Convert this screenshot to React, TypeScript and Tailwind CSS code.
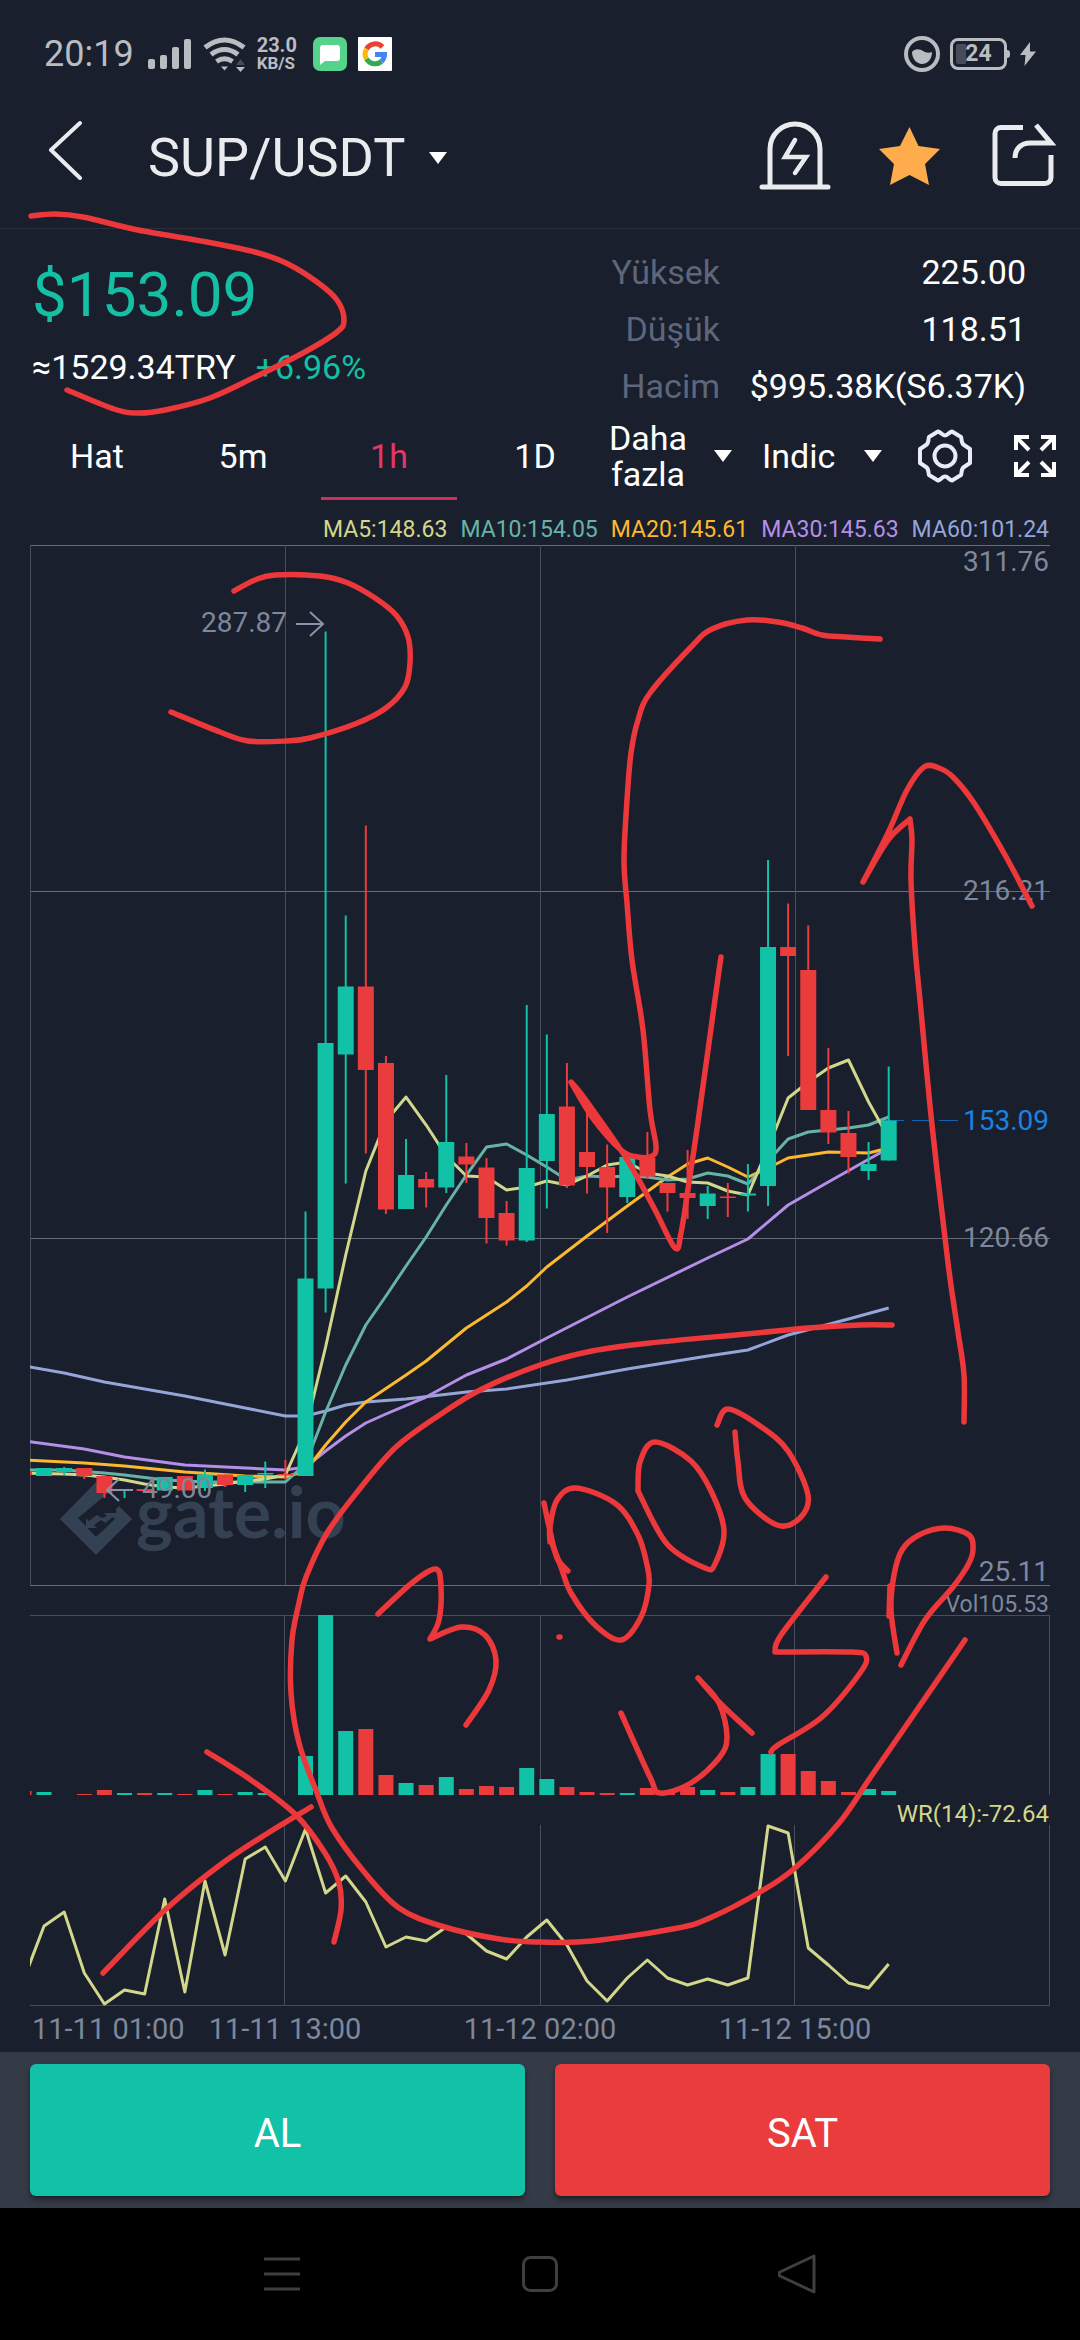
import { useState } from 'react';

type Point = [number, number];

interface Candle {
  up: boolean;
  high: number;
  top: number;
  bottom: number;
  low: number;
  volume: number;
}

const STEP = 20.11;
const FIRST_INDEX = -14;
const xAt = (index: number) => 305.5 + index * STEP;

const c = (up: boolean, high: number, top: number, bottom: number, low: number, volume: number): Candle => ({
  up,
  high,
  top,
  bottom,
  low,
  volume,
});

const candles: Candle[] = [
  c(false, 1471, 1471, 1475, 1475, 4),
  c(true, 1468, 1468, 1476, 1476, 3),
  c(true, 1467, 1468, 1472, 1475, 0),
  c(false, 1468, 1468, 1476, 1479, 1),
  c(false, 1476, 1476, 1493, 1498, 5),
  c(true, 1489, 1489.5, 1491, 1498, 2),
  c(false, 1489, 1489, 1491, 1491, 2),
  c(true, 1477, 1477, 1490.5, 1490.5, 2),
  c(false, 1476, 1476, 1490.5, 1490.5, 1),
  c(true, 1469.5, 1474.5, 1488, 1491, 5),
  c(false, 1474.5, 1474.5, 1485, 1487, 1),
  c(true, 1475, 1475, 1485, 1492, 3),
  c(true, 1461.5, 1473, 1474.5, 1488, 2),
  c(false, 1460, 1474, 1475.5, 1479.5, 0),
  c(true, 1211.5, 1278.5, 1476, 1476, 39),
  c(true, 631.5, 1043, 1288.5, 1312.5, 180),
  c(true, 915.5, 986.5, 1054.5, 1183.5, 64),
  c(false, 825.5, 986.5, 1070, 1153.5, 66),
  c(false, 1056, 1063, 1209.5, 1214, 20),
  c(true, 1139, 1175, 1209, 1209, 12),
  c(false, 1172, 1179, 1187.5, 1207.5, 10),
  c(true, 1075, 1142, 1187.5, 1193, 18),
  c(false, 1143, 1156.5, 1164.5, 1183, 6),
  c(false, 1158, 1167.5, 1218, 1243.5, 9),
  c(false, 1201, 1213, 1240.5, 1245.5, 8),
  c(true, 1005, 1168, 1240.5, 1242, 27),
  c(true, 1034.5, 1114, 1161, 1208.5, 16),
  c(false, 1063, 1106.5, 1185.5, 1188, 8),
  c(false, 1113, 1152, 1167, 1193.5, 3),
  c(false, 1144.5, 1167, 1187.5, 1233, 2),
  c(true, 1157, 1157, 1197, 1203, 2),
  c(false, 1132, 1158, 1176.5, 1179, 7),
  c(false, 1183, 1183, 1193, 1211.5, 3),
  c(false, 1150, 1193, 1198, 1219, 8),
  c(true, 1186, 1193.5, 1206, 1219, 5),
  c(false, 1183, 1196.5, 1198, 1217, 3),
  c(true, 1164, 1193.5, 1195.5, 1211.5, 8),
  c(true, 860, 947, 1186, 1206, 41),
  c(false, 903.5, 947, 956, 1056, 41),
  c(false, 925.5, 970, 1110, 1110, 24),
  c(false, 1048, 1110, 1132.5, 1144, 14),
  c(false, 1111, 1133, 1157, 1173.5, 3),
  c(true, 1142, 1164, 1171, 1180, 6),
  c(true, 1066.5, 1120.5, 1160.5, 1160.5, 4),
];

// [candle index, y] pairs
const ma5: Point[] = [
  [-14, 1473], [-12, 1474], [-11, 1475], [-10, 1477], [-9, 1480], [-8, 1484], [-7, 1487], [-6, 1488],
  [-5, 1486], [-4, 1484], [-3, 1481], [-2, 1479], [-1, 1475], [0, 1430], [1, 1347], [2, 1255], [3, 1171],
  [4, 1121], [5, 1097], [6, 1125], [7, 1156], [8, 1176], [9, 1177], [10, 1190], [11, 1187], [12, 1181],
  [13, 1185], [14, 1176], [15, 1165], [16, 1162], [17, 1173], [18, 1176], [19, 1182], [20, 1183],
  [21, 1191], [22, 1195], [23, 1148], [24, 1098], [25, 1082], [26, 1068], [27, 1060], [28, 1102], [29, 1138],
];

const ma10: Point[] = [
  [-14, 1470], [-12, 1470], [-10, 1473], [-9, 1475], [-7, 1480], [-5, 1482], [-3, 1482], [-1, 1482],
  [0, 1464], [1, 1412], [2, 1365], [3, 1325], [4, 1296], [5, 1266], [6, 1237], [7, 1205], [8, 1175],
  [9, 1147], [10, 1144], [11, 1155], [12, 1167], [13, 1180], [14, 1176], [15, 1177], [16, 1176],
  [17, 1177], [18, 1180], [19, 1179], [20, 1173], [21, 1176], [22, 1184], [23, 1161], [24, 1139],
  [25, 1132], [26, 1130], [27, 1128], [28, 1125], [29, 1117],
];

const ma20: Point[] = [
  [-14, 1460], [-11, 1463], [-9, 1466], [-6, 1472], [-3, 1476], [-1, 1477], [0, 1471], [1, 1445],
  [2, 1422], [3, 1402], [5, 1375], [6, 1361], [8, 1328], [10, 1302], [11, 1286], [12, 1267], [14, 1236],
  [16, 1206], [18, 1177], [19, 1164], [20, 1158], [21, 1167], [22, 1177], [23, 1168], [24, 1158],
  [26, 1152], [28, 1153], [29, 1148],
];

const ma30: Point[] = [
  [-14, 1441], [-11, 1449], [-9, 1457], [-6, 1465], [-1, 1470], [0, 1467], [1, 1451], [2, 1436],
  [3, 1423], [4, 1414], [6, 1397], [8, 1375], [10, 1359], [12, 1338], [16, 1297], [20, 1258],
  [22, 1239], [24, 1205], [26, 1182], [29, 1148],
];

const ma60: Point[] = [
  [-14, 1366], [-12, 1373], [-10, 1382], [-8, 1389], [-6, 1396], [-3, 1408], [-1, 1416], [0, 1416],
  [1, 1411], [2, 1405], [3, 1402], [5, 1399], [8, 1392], [10, 1389], [13, 1380], [16, 1369], [20, 1356],
  [22, 1350], [24, 1335], [27, 1319], [29, 1308],
];

const wr: Point[] = [
  1979, 1926, 1912, 1973, 2004, 1990, 1994, 1899, 1992, 1881, 1955, 1859, 1847, 1881, 1829, 1893, 1876, 1902,
  1947, 1937, 1941, 1927, 1934, 1951, 1959, 1937, 1920, 1945, 1981, 2001, 1978, 1960, 1978, 1985, 1979, 1985,
  1978, 1826, 1833, 1948, 1965, 1983, 1988, 1964,
].map((y, index) => [index + FIRST_INDEX, y]);

const lines = [
  { key: 'ma60', color: '#95a5d8', points: ma60 },
  { key: 'ma30', color: '#b58ee8', points: ma30 },
  { key: 'ma20', color: '#fcb92f', points: ma20 },
  { key: 'ma10', color: '#68b3a8', points: ma10 },
  { key: 'ma5', color: '#d3d78b', points: ma5 },
  { key: 'wr', color: '#d3d78b', points: wr },
];

const toPoints = (points: Point[]) => points.map(([index, y]) => `${xAt(index)},${y}`).join(' ');

// Hand-drawn notes over the chart. A repeated point makes a sharp corner.
const notes: Point[][] = [
  [[31, 216], [55, 214], [83, 217], [138, 230], [207, 242], [255, 252], [286, 263], [317, 282], [337, 300], [344, 320], [337, 332], [303, 353], [255, 377], [210, 398], [165, 410], [138, 413], [114, 409], [67, 390]],
  [[234, 591], [255, 580], [275, 575], [320, 576], [348, 583], [375, 598], [396, 615], [408, 637], [410, 663], [405, 687], [386, 708], [355, 724], [310, 738], [286, 741], [248, 741], [220, 732], [171, 712]],
  [[880, 639], [846, 637], [822, 635], [802, 628], [778, 622], [747, 620], [712, 629], [691, 647], [650, 693], [638, 720], [631, 753], [627, 800], [624, 860], [627, 903], [632, 960], [643, 1030], [650, 1110], [656, 1146], [652, 1156], [638, 1157], [621, 1150], [592, 1117], [571, 1082], [571, 1082], [585, 1099], [626, 1158], [654, 1208], [675, 1248], [681, 1233], [688, 1189], [698, 1122], [717, 985], [721, 957]],
  [[1032, 906], [1005, 855], [974, 803], [953, 777], [939, 768], [924, 767], [907, 790], [888, 833], [863, 882], [863, 882], [888, 840], [910, 819], [910, 819], [912, 840], [911, 880], [915, 947], [920, 1000], [932, 1125], [948, 1263], [958, 1332], [964, 1375], [964, 1422]],
  [[892, 1325], [860, 1325], [808, 1328], [746, 1334], [650, 1343], [592, 1351], [540, 1365], [482, 1389], [441, 1414], [396, 1447], [358, 1491], [327, 1533], [306, 1577], [299, 1603], [292, 1640], [291, 1693], [299, 1743], [317, 1793], [332, 1828], [365, 1873], [399, 1908], [441, 1926], [499, 1939], [540, 1942], [592, 1941], [678, 1928], [712, 1917], [760, 1892], [795, 1868], [839, 1823], [870, 1778], [908, 1723], [965, 1640]],
  [[378, 1614], [413, 1582], [436, 1569], [441, 1587], [439, 1620], [430, 1639], [430, 1639], [461, 1627], [485, 1635], [496, 1660], [489, 1690], [466, 1725]],
  [[559, 1637], [560, 1637]],
  [[544, 1503], [550, 1531], [557, 1558], [568, 1571]],
  [[550, 1542], [550, 1527], [557, 1500], [576, 1488], [616, 1504], [638, 1535], [647, 1565], [649, 1585], [641, 1617], [621, 1640], [595, 1625], [571, 1593], [561, 1567], [550, 1538]],
  [[638, 1491], [640, 1462], [655, 1442], [691, 1461], [712, 1493], [724, 1531], [715, 1564], [705, 1568], [667, 1544], [638, 1491]],
  [[717, 1425], [728, 1409], [760, 1426], [788, 1451], [808, 1495], [800, 1518], [777, 1525], [745, 1498], [738, 1462], [735, 1432]],
  [[621, 1713], [650, 1777], [660, 1793], [691, 1783], [719, 1758], [727, 1737], [719, 1703], [698, 1678], [698, 1678], [722, 1705], [752, 1733]],
  [[826, 1577], [781, 1635], [775, 1652], [775, 1652], [850, 1652], [866, 1656], [860, 1673], [822, 1717], [778, 1745], [771, 1752]],
  [[890, 1586], [889, 1616]],
  [[897, 1653], [891, 1610], [894, 1575], [902, 1550], [919, 1535], [945, 1528], [969, 1535], [973, 1550], [968, 1565], [953, 1587], [925, 1620], [901, 1665]],
  [[207, 1752], [251, 1780], [296, 1815], [325, 1853], [339, 1883], [341, 1910], [334, 1942]],
  [[103, 1973], [165, 1910], [220, 1865], [268, 1833], [311, 1807]],
];

const smoothPath = (points: Point[]) => {
  let d = `M${points[0][0]} ${points[0][1]}`;
  for (let i = 0; i < points.length - 1; i += 1) {
    const p0 = points[i - 1] ?? points[i];
    const p1 = points[i];
    const p2 = points[i + 1];
    const p3 = points[i + 2] ?? p2;
    if (p1[0] === p2[0] && p1[1] === p2[1]) {
      continue;
    }
    const c1 = [p1[0] + (p2[0] - p0[0]) / 6, p1[1] + (p2[1] - p0[1]) / 6];
    const c2 = [p2[0] - (p3[0] - p1[0]) / 6, p2[1] - (p3[1] - p1[1]) / 6];
    d += `C${c1.join(' ')} ${c2.join(' ')} ${p2.join(' ')}`;
  }
  return d;
};

const StatusBar = () => (
  <div className="flex h-[108px] items-center justify-between pr-11 pl-11 text-[#b9bcc1]">
    <div className="flex items-center">
      <span className="text-[36px] leading-10">20:19</span>
      <svg className="ml-[14px] h-8 w-11" viewBox="0 0 44 32" fill="currentColor" aria-hidden="true">
        <rect x="0" y="21" width="7" height="10" rx="2" />
        <rect x="12" y="17" width="7" height="14" rx="2" />
        <rect x="24" y="9" width="7" height="22" rx="2" />
        <rect x="36" y="1" width="7" height="30" rx="2" />
      </svg>
      <svg className="ml-[11px] h-9 w-11" viewBox="0 0 44 36" fill="none" stroke="currentColor" strokeWidth="5" aria-hidden="true">
        <path d="M2 11.500Q21.500-3.500 41 11.500" />
        <path d="M8 18.500Q21.500 8.500 35 18.500" />
        <path d="M13.500 25.500Q21.500 20 29.500 25.500" />
        <path d="M18 30.500h7l-3.500 4z" fill="currentColor" stroke="none" />
        <path d="M33 29l4.500-6 4.500 6z" fill="#474c59" stroke="none" />
        <path d="M33 31h9l-4.500 5z" fill="currentColor" stroke="none" />
      </svg>
      <span className="ml-[10px] flex w-14 flex-col font-bold">
        <span className="text-[20px] leading-[18px]">23.0</span>
        <span className="text-[17px] leading-[18px]">KB/S</span>
      </span>
      <svg className="h-[34px] w-[34px]" viewBox="0 0 34 34" aria-hidden="true">
        <rect width="34" height="34" rx="7" fill="#56d38a" />
        <path d="M10 8h14a3 3 0 0 1 3 3v10a3 3 0 0 1-3 3H12l-5 4V11a3 3 0 0 1 3-3z" fill="#fff" />
      </svg>
      <svg className="ml-[11px] h-[34px] w-[34px]" viewBox="0 0 34 34" fill="none" strokeWidth="5" aria-hidden="true">
        <rect width="34" height="34" rx="1" fill="#fff" />
        <path d="M24.500 10A10 10 0 0 0 8.500 12" stroke="#ea4335" />
        <path d="M8.500 12A10 10 0 0 0 8.500 22" stroke="#fbbc05" />
        <path d="M8.500 22A10 10 0 0 0 23.500 24.500" stroke="#34a853" />
        <path d="M23.500 24.500A10 10 0 0 0 26.500 17.500H17" stroke="#4285f4" />
      </svg>
    </div>

    <div className="flex items-center gap-[10px]">
      <svg className="h-9 w-9" viewBox="0 0 36 36" aria-hidden="true">
        <circle cx="18" cy="18" r="16" fill="none" stroke="currentColor" strokeWidth="4" />
        <path d="M8 16c3-4 8-3 11-1 3 2 6 2 9 1 0 8-5 12-10 12S8 23 8 16z" fill="currentColor" />
      </svg>
      <div className="flex items-center">
        <div className="flex h-8 w-[57px] items-center justify-center rounded-lg border-3 border-current bg-linear-to-r from-[#474c59] from-25% to-transparent to-25% bg-clip-content p-[3px] text-[23px] font-bold">
          24
        </div>
        <span className="h-2 w-[3px] rounded-r-full bg-current" />
      </div>
      <svg className="h-6 w-4" viewBox="0 0 16 24" fill="currentColor" aria-hidden="true">
        <path d="M10 0L0 13h5.500L4.500 24 16 9.500h-6z" />
      </svg>
    </div>
  </div>
);

const Caret = () => (
  <svg className="h-3 w-[18px]" viewBox="0 0 18 12" fill="#fff" aria-hidden="true">
    <path d="M0 0h18l-9 12z" />
  </svg>
);

const Header = () => (
  <header className="border-b border-[#2a313e] pb-6">
    <div className="flex h-24 items-center justify-between pr-6 pl-12 text-[#e9ebee]">
      <div className="flex items-center">
        <button type="button" aria-label="Geri" className="pb-3">
          <svg className="h-[60px] w-9" viewBox="0 0 36 60" fill="none" stroke="currentColor" strokeWidth="4" strokeLinecap="round" strokeLinejoin="round">
            <path d="M32 3L3 30l29 28" />
          </svg>
        </button>
        <button type="button" aria-haspopup="listbox" className="ml-16 flex items-center gap-6 pt-1 text-[54px] leading-[60px]">
          <h1>SUP/USDT</h1>
          <Caret />
        </button>
      </div>

      <div className="flex items-center">
        <button type="button" aria-label="Fiyat alarmı">
          <svg className="h-[70px] w-[72px]" viewBox="0 0 72 70" fill="none" stroke="currentColor" strokeWidth="5" strokeLinecap="round">
            <path d="M11 65V28a25 25 0 0 1 50 0v37M3 66h66" />
            <path d="M36 19L26 36h21L36 52" strokeWidth="4.500" strokeLinejoin="miter" />
          </svg>
        </button>
        <button type="button" aria-label="Favorilerden çıkar" className="ml-12">
          <svg className="h-[60px] w-[61px]" viewBox="0 0 61 60" fill="#ffad4c">
            <path d="M30.500 1l9 19L61 23 46 38l4 21-19.500-10L11 59l4-21L0 23l21-3z" />
          </svg>
        </button>
        <button type="button" aria-label="Paylaş" className="ml-[52px] pb-1">
          <svg className="h-16 w-16" viewBox="0 0 64 64" fill="none" stroke="currentColor" strokeWidth="5">
            <path d="M31 5.500H9a6 6 0 0 0-6 6v44a6 6 0 0 0 6 6h44a6 6 0 0 0 6-6V33" />
            <path d="M23 36c0-9 6-15 15-15h21L44 3" strokeWidth="5" />
          </svg>
        </button>
      </div>
    </div>
  </header>
);

const stats = [
  { label: 'Yüksek', value: '225.00' },
  { label: 'Düşük', value: '118.51' },
  { label: 'Hacim', value: '$995.38K(S6.37K)' },
];

const Quote = () => (
  <section className="flex justify-between pt-[14px] pr-[54px] pl-8">
    <div className="pt-4">
      <p className="text-[62px] leading-[72px] text-[#15bfa3]">$153.09</p>
      <p className="flex gap-5 pt-4 text-[34px] leading-10">
        <span>≈1529.34TRY</span>
        <span className="text-[#15bfa3]">+6.96%</span>
      </p>
    </div>
    <dl className="pt-px text-right text-[34px] leading-[57px]">
      {stats.map((stat) => (
        <div key={stat.label} className="flex justify-end">
          <dt className="text-[#5d667b]">{stat.label}</dt>
          <dd className="w-[306px]">{stat.value}</dd>
        </div>
      ))}
    </dl>
  </section>
);

const intervals = ['Hat', '5m', '1h', '1D'];

const Toolbar = () => {
  const [active, setActive] = useState('1h');

  return (
    <nav className="flex h-[85px] items-stretch px-6 text-[34px] leading-9">
      {intervals.map((interval) => (
        <button
          key={interval}
          type="button"
          onClick={() => setActive(interval)}
          className={
            interval === active
              ? 'relative w-[146px] pb-1 text-[#e8346a] after:absolute after:inset-x-[5px] after:bottom-0 after:h-[3px] after:bg-[#d22f58]'
              : 'w-[146px] pb-1'
          }
        >
          {interval}
        </button>
      ))}
      <button type="button" aria-haspopup="menu" className="flex items-center gap-[26px] pb-1">
        <span className="w-20 text-center">Daha fazla</span>
        <Caret />
      </button>
      <button type="button" aria-haspopup="menu" className="ml-[30px] flex items-center gap-6 pb-1">
        <span className="w-[78px] text-left">Indic</span>
        <Caret />
      </button>
      <button type="button" aria-label="Ayarlar" className="ml-9 pb-1">
        <svg className="h-[54px] w-[54px]" viewBox="0 0 54 54" fill="none" stroke="#e8ecf8" strokeWidth="4" strokeLinejoin="round">
          <path d="M27 6.500C30 6.500 31 3 34 2.500L43 8C44 11 43 14 46 16L52 20V34L46 38C43 40 44 43 43 46L34 51.500C31 51 30 47.500 27 47.500C24 47.500 23 51 20 51.500L11 46C10 43 11 40 8 38L2 34V20L8 16C11 14 10 11 11 8L20 2.500C23 3 24 6.500 27 6.500Z" />
          <circle cx="27" cy="27" r="10.500" />
        </svg>
      </button>
      <button type="button" aria-label="Tam ekran" className="ml-auto pb-1">
        <svg className="h-[42px] w-[42px]" viewBox="0 0 42 42" fill="none" stroke="#fff" strokeWidth="4">
          <path d="M2 15V2h13M2 2l13 13M27 2h13v13M40 2L27 15M2 27v13h13M2 40l13-13M40 27v13H27M40 40L27 27" />
        </svg>
      </button>
    </nav>
  );
};

const Averages = () => (
  <div className="flex h-11 items-end justify-end gap-[13px] pr-[31px] text-[23px] leading-7">
    <span className="text-[#d3d78b]">MA5:148.63</span>
    <span className="text-[#68b3a8]">MA10:154.05</span>
    <span className="text-[#fcb92f]">MA20:145.61</span>
    <span className="text-[#b58ee8]">MA30:145.63</span>
    <span className="text-[#95a5d8]">MA60:101.24</span>
  </div>
);

const Chart = () => (
  <svg className="block h-auto w-full" viewBox="0 544 1080 1508" role="img" aria-label="SUP/USDT 1h">
    <defs>
      <clipPath id="plot">
        <rect x="30" y="544" width="1020" height="1464" />
      </clipPath>
    </defs>

    <g fill="#334152">
      <path d="M96 1482L60 1519L96 1555L132 1519L119 1506L116 1509V1518L96 1537L78 1518L108 1493Z" />
      <path d="M86 1518v10h11l-3-3 7-5 4 3 8-6 3 3v-7h-12l3 3-5 2-5-3-8 6z" />
      <text x="136" y="1538" className="font-[Lato] text-[70px] font-bold">
        gate.io
      </text>
    </g>

    <g stroke="#666c79" strokeWidth="1" shapeRendering="crispEdges">
      <path d="M30 545.500H1050M30 891.500H1050M30 1238.500H1050M30 1585.500H1050" />
      <path d="M30.500 545V1585M285.500 545V1585M540.500 545V1585M795.500 545V1585" stroke="#474d5a" />
      <path d="M30 1615.500H1050M30 2005.500H1050" stroke="#474d5a" />
      <path d="M284.500 1615V1795M540.500 1615V1795M794.500 1615V1795M1049.500 1615V1795" stroke="#474d5a" />
      <path d="M284.500 1825V2005M540.500 1825V2005M794.500 1825V2005M1049.500 1825V2005" stroke="#474d5a" />
    </g>

    <g clipPath="url(#plot)">
      <path d="M885 1120.500H962" stroke="#0f62b0" strokeDasharray="19 8" />
      {lines.map((line) => (
        <polyline key={line.key} points={toPoints(line.points)} fill="none" stroke={line.color} strokeWidth="3" strokeLinejoin="round" />
      ))}
      {candles.map((candle, i) => {
        const x = xAt(i + FIRST_INDEX);
        return (
          <g key={i} fill={candle.up ? '#11c2a6' : '#ea3b3d'}>
            <rect x={x - 1} y={candle.high} width="2" height={candle.low - candle.high} />
            <rect x={x - 8} y={candle.top} width="16" height={candle.bottom - candle.top} />
            <rect x={x - 7.5} y={1795 - candle.volume} width="15" height={candle.volume} />
          </g>
        );
      })}
    </g>

    <g fill="none" stroke="#8a93ab" strokeWidth="2">
      <path d="M296 624h27M310 612l13 12-13 12" />
      <path d="M133 1490h-26M119 1479l-12 11 12 11" />
    </g>

    <g fill="#7e879b" className="text-[28px]">
      <text x="201" y="632">287.87</text>
      <text x="142" y="1498">49.00</text>
      <g textAnchor="end">
        <text x="1049" y="571">311.76</text>
        <text x="1049" y="900">216.21</text>
        <text x="1049" y="1130" fill="#1b82e2">153.09</text>
        <text x="1049" y="1247">120.66</text>
        <text x="1049" y="1581">25.11</text>
        <text x="1049" y="1612" className="text-[23px]">Vol105.53</text>
        <text x="1049" y="1822" fill="#d3d78b" className="text-[24px]">WR(14):-72.64</text>
      </g>
      <g className="text-[29px]">
        <text x="32" y="2039">11-11 01:00</text>
        <text x="285" y="2039" textAnchor="middle">11-11 13:00</text>
        <text x="540" y="2039" textAnchor="middle">11-12 02:00</text>
        <text x="795" y="2039" textAnchor="middle">11-12 15:00</text>
      </g>
    </g>
  </svg>
);

const TradeBar = () => (
  <div className="grid grid-cols-2 gap-[30px] bg-[#343a46] px-[30px] py-3 text-[40px] text-white">
    <button type="button" className="h-[132px] rounded-md bg-[#11c2a6] pt-2 shadow-md shadow-black/40">
      AL
    </button>
    <button type="button" className="h-[132px] rounded-md bg-[#ea3b3d] pt-2 shadow-md shadow-black/40">
      SAT
    </button>
  </div>
);

const SystemNav = () => (
  <nav className="grid h-[132px] grid-cols-3 place-items-center bg-black px-[153px] text-[#3f3f3f]">
    <button type="button" aria-label="Son uygulamalar">
      <svg className="h-10 w-10" viewBox="0 0 40 40" stroke="currentColor" strokeWidth="3">
        <path d="M2 5h36M2 20h36M2 35h36" />
      </svg>
    </button>
    <button type="button" aria-label="Ana ekran">
      <svg className="h-10 w-10" viewBox="0 0 40 40" fill="none" stroke="currentColor" strokeWidth="3">
        <rect x="3.500" y="3.500" width="33" height="33" rx="7" />
      </svg>
    </button>
    <button type="button" aria-label="Geri dön">
      <svg className="h-10 w-10" viewBox="0 0 40 40" fill="none" stroke="currentColor" strokeWidth="3" strokeLinejoin="round">
        <path d="M36 2v36L2 22q-2-2 0-4z" />
      </svg>
    </button>
  </nav>
);

const Notes = () => (
  <svg
    className="pointer-events-none absolute inset-x-0 top-0 h-auto w-full"
    viewBox="0 0 1080 2340"
    fill="none"
    stroke="#ec383b"
    strokeWidth="5.500"
    strokeLinecap="round"
    strokeLinejoin="round"
    aria-hidden="true"
  >
    {notes.map((points, i) => (
      <path key={i} d={smoothPath(points)} />
    ))}
  </svg>
);

export default function App() {
  return (
    <div className="relative min-h-screen bg-black font-[Roboto,sans-serif]">
      <main className="bg-[#191f2c] text-white">
        <StatusBar />
        <Header />
        <Quote />
        <Toolbar />
        <Averages />
        <Chart />
        <TradeBar />
      </main>
      <SystemNav />
      <Notes />
    </div>
  );
}
